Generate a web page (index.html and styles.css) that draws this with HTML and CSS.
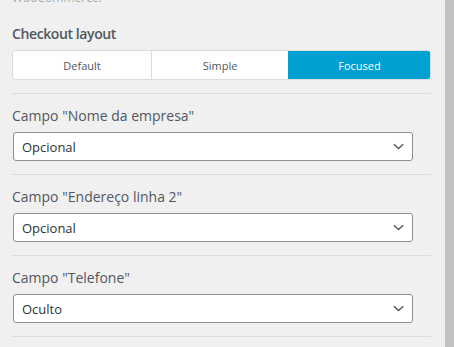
FILE: index.html
```html
<!DOCTYPE html>
<html>
<head>
<meta charset="utf-8">
<link rel="stylesheet" href="styles.css">
</head>
<body>
<div class="frame">
  <div class="panel">
    <div class="note">WooCommerce.</div>
    <div class="heading">Checkout layout</div>
    <div class="segmented">
      <div class="seg">Default</div>
      <div class="seg">Simple</div>
      <div class="seg active">Focused</div>
    </div>
    <div class="divider"></div>

    <div class="field">
      <div class="label">Campo "Nome da empresa"</div>
      <div class="select"><span>Opcional</span>
        <svg class="chev" width="11" height="7" viewBox="0 0 11 7"><path d="M0.8 1.2 L5.5 5.6 L10.2 1.2" fill="none" stroke="#50575e" stroke-width="1.4"/></svg>
      </div>
    </div>
    <div class="divider"></div>

    <div class="field">
      <div class="label">Campo "Endereço linha 2"</div>
      <div class="select"><span>Opcional</span>
        <svg class="chev" width="11" height="7" viewBox="0 0 11 7"><path d="M0.8 1.2 L5.5 5.6 L10.2 1.2" fill="none" stroke="#50575e" stroke-width="1.4"/></svg>
      </div>
    </div>
    <div class="divider"></div>

    <div class="field">
      <div class="label">Campo "Telefone"</div>
      <div class="select"><span>Oculto</span>
        <svg class="chev" width="11" height="7" viewBox="0 0 11 7"><path d="M0.8 1.2 L5.5 5.6 L10.2 1.2" fill="none" stroke="#50575e" stroke-width="1.4"/></svg>
      </div>
    </div>
    <div class="divider"></div>
  </div>
  <div class="scrollbar"></div>
</div>
</body>
</html>
```
FILE: styles.css
```css
html, body {
  margin: 0;
  padding: 0;
  background: #f0f0f1;
  overflow: hidden;
}
body {
  font-family: "Open Sans", "Noto Sans", sans-serif;
  color: #50575e;
}
.frame {
  display: flex;
  width: 454px;
  height: 347px;
}
.panel {
  width: 419px;
  padding-left: 12px;
  padding-right: 14px;
}
.scrollbar {
  width: 9px;
  background: #c1c1c1;
}
.note {
  font-size: 12px;
  line-height: 14px;
  margin-top: -9px;
  color: #a7aaad;
}
.heading {
  margin-top: 19px;
  font-size: 14px;
  line-height: 20px;
  font-weight: 600;
  letter-spacing: -0.4px;
  color: #50575e;
}
.segmented {
  margin-top: 6px;
  display: grid;
  grid-template-columns: 138px 137px 1fr;
  height: 28px;
  border: 1px solid #dcdcde;
  border-radius: 3px;
  background: #fff;
  overflow: hidden;
}
.seg {
  display: flex;
  align-items: center;
  justify-content: center;
  font-size: 11px;
  color: #50575e;
  border-left: 1px solid #dcdcde;
}
.seg:first-child {
  border-left: none;
}
.seg.active {
  background: #00a0d2;
  color: #fff;
  border-left-color: #00a0d2;
}
.divider {
  margin-top: 13px;
  height: 1px;
  background: #dcdcde;
}
.field {
  padding-top: 13px;
}
.label {
  font-size: 14px;
  line-height: 18px;
  color: #50575e;
}
.select {
  margin-top: 7px;
  margin-left: 1px;
  width: 382px;
  height: 27px;
  border: 1px solid #8c8f94;
  border-radius: 3px;
  background: #fff;
  display: flex;
  align-items: center;
  justify-content: space-between;
  padding: 0 8px 0 8px;
  box-sizing: content-box;
  font-size: 13px;
  color: #2c3338;
}
.chev {
  display: block;
}
```
